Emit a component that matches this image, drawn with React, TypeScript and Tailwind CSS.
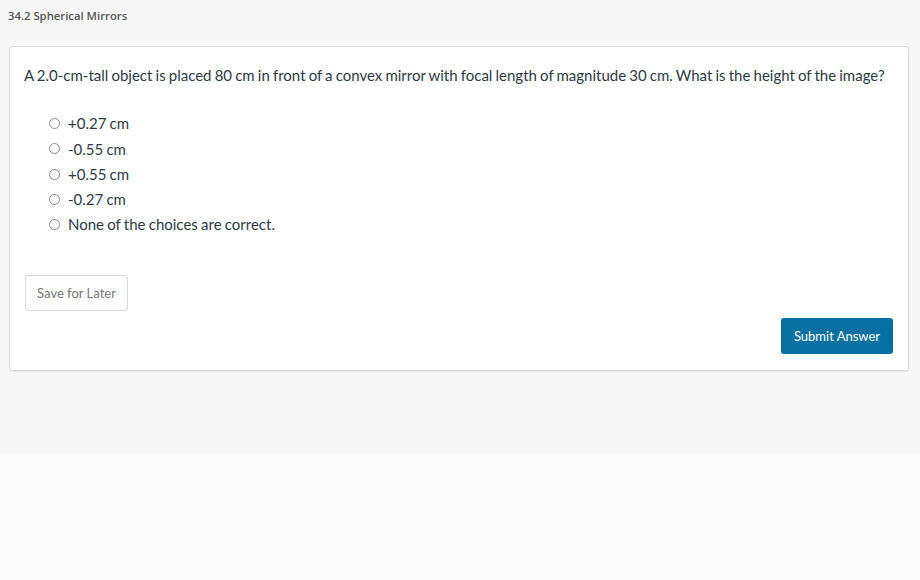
import React from "react";

const options = ["+0.27 cm", "-0.55 cm", "+0.55 cm", "-0.27 cm", "None of the choices are correct."];

export default function App() {
  return (
    <div className="w-[920px] h-[580px] flex flex-col bg-[#fafafa]" style={{ fontFamily: "Lato, 'Liberation Sans', sans-serif" }}>
      <div className="h-[453px] bg-[#f7f7f7] flex flex-col">
        <div className="pl-[8px] pt-[8px] h-[46px] text-[11.3px] font-semibold text-[#555]" style={{ fontFamily: "'Open Sans', sans-serif" }}>
          34.2 Spherical Mirrors
        </div>
        <div className="ml-[9px] w-[900px] h-[325px] bg-white border border-[#dcdcdc] rounded-[3px] shadow-[0_1px_1px_rgba(0,0,0,0.06)] flex flex-col px-[14px]">
          <p className="mt-[18px] text-[15px] leading-[20px] text-[#2d3b45] whitespace-nowrap [word-spacing:-0.7px]">
            A 2.0-cm-tall object is placed 80 cm in front of a convex mirror with focal length of magnitude 30 cm. What is the height of the image?
          </p>
          <div className="mt-[26px] ml-[25px] flex flex-col">
            {options.map((o) => (
              <label key={o} className="flex items-center h-[25.25px] text-[15px] text-[#2d3b45] [word-spacing:-0.6px]">
                <span className="w-[11px] h-[11px] rounded-full border border-[#8a8a8a] bg-white mr-[8px]" />
                {o}
              </label>
            ))}
          </div>
          <div className="mt-[38px]">
            <button className="w-[103px] h-[36px] border border-[#dadada] rounded-[3px] bg-white text-[13px] text-[#777] ml-[1px]">Save for Later</button>
          </div>
          <div className="mt-[7px] flex justify-end pr-[1px]">
            <button className="w-[112px] h-[36px] rounded-[3px] bg-[#0770a3] text-[13px] text-white">Submit Answer</button>
          </div>
        </div>
      </div>
    </div>
  );
}
